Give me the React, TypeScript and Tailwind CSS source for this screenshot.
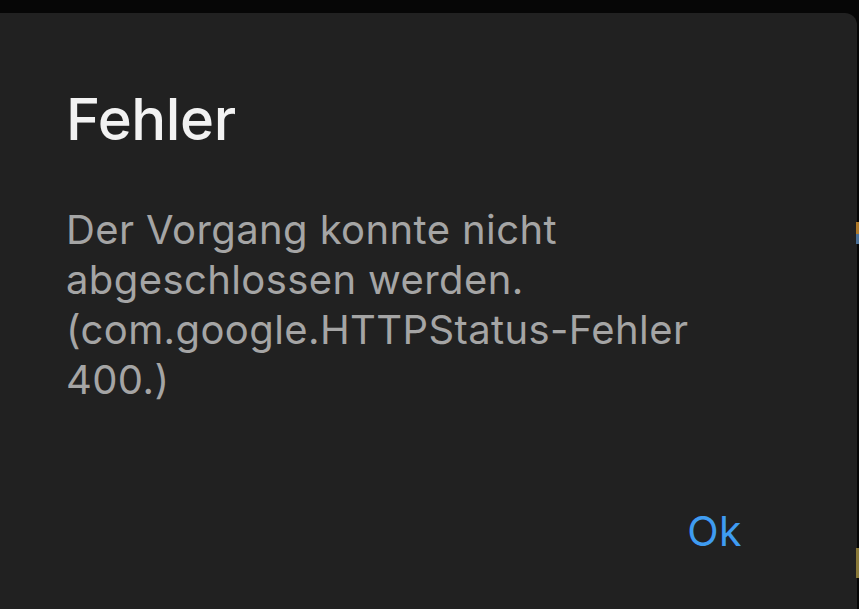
export default function App() {
  return (
    <div className="relative h-[609px] w-[859px] overflow-hidden bg-[#060606]" style={{ fontFamily: "Inter, 'Noto Sans', sans-serif" }}>
      {/* slivers of the screen behind the dialog, right edge */}
      <div className="absolute right-0 top-[222px] h-[12px] w-[3px] bg-[#b07a2a]" />
      <div className="absolute right-0 top-[234px] h-[10px] w-[3px] bg-[#4a6f96]" />
      <div className="absolute right-0 top-[548px] h-[30px] w-[3px] bg-[#8a7a3a]" />

      <div className="mt-[13px] mr-[2px] flex h-[620px] flex-col rounded-tr-[12px] bg-[#212121] pl-[66px] pr-[40px]">
        <h1 className="mt-[70px] text-[58px] font-medium leading-[72px] tracking-[-0.4px] text-[#f2f2f2]">Fehler</h1>
        <p className="mt-[50px] text-[40px] leading-[50px] tracking-[0.4px] text-[#a5a5a5]">
          <span className="block">Der Vorgang konnte nicht</span>
          <span className="block">abgeschlossen werden.</span>
          <span className="block">(com.google.HTTPStatus-Fehler</span>
          <span className="block">400.)</span>
        </p>
        <div className="mt-[101px] flex justify-end pr-[75px]">
          <button className="text-[41px] leading-[50px] tracking-[0.4px] text-[#3f9cf1]">Ok</button>
        </div>
      </div>
    </div>
  );
}
